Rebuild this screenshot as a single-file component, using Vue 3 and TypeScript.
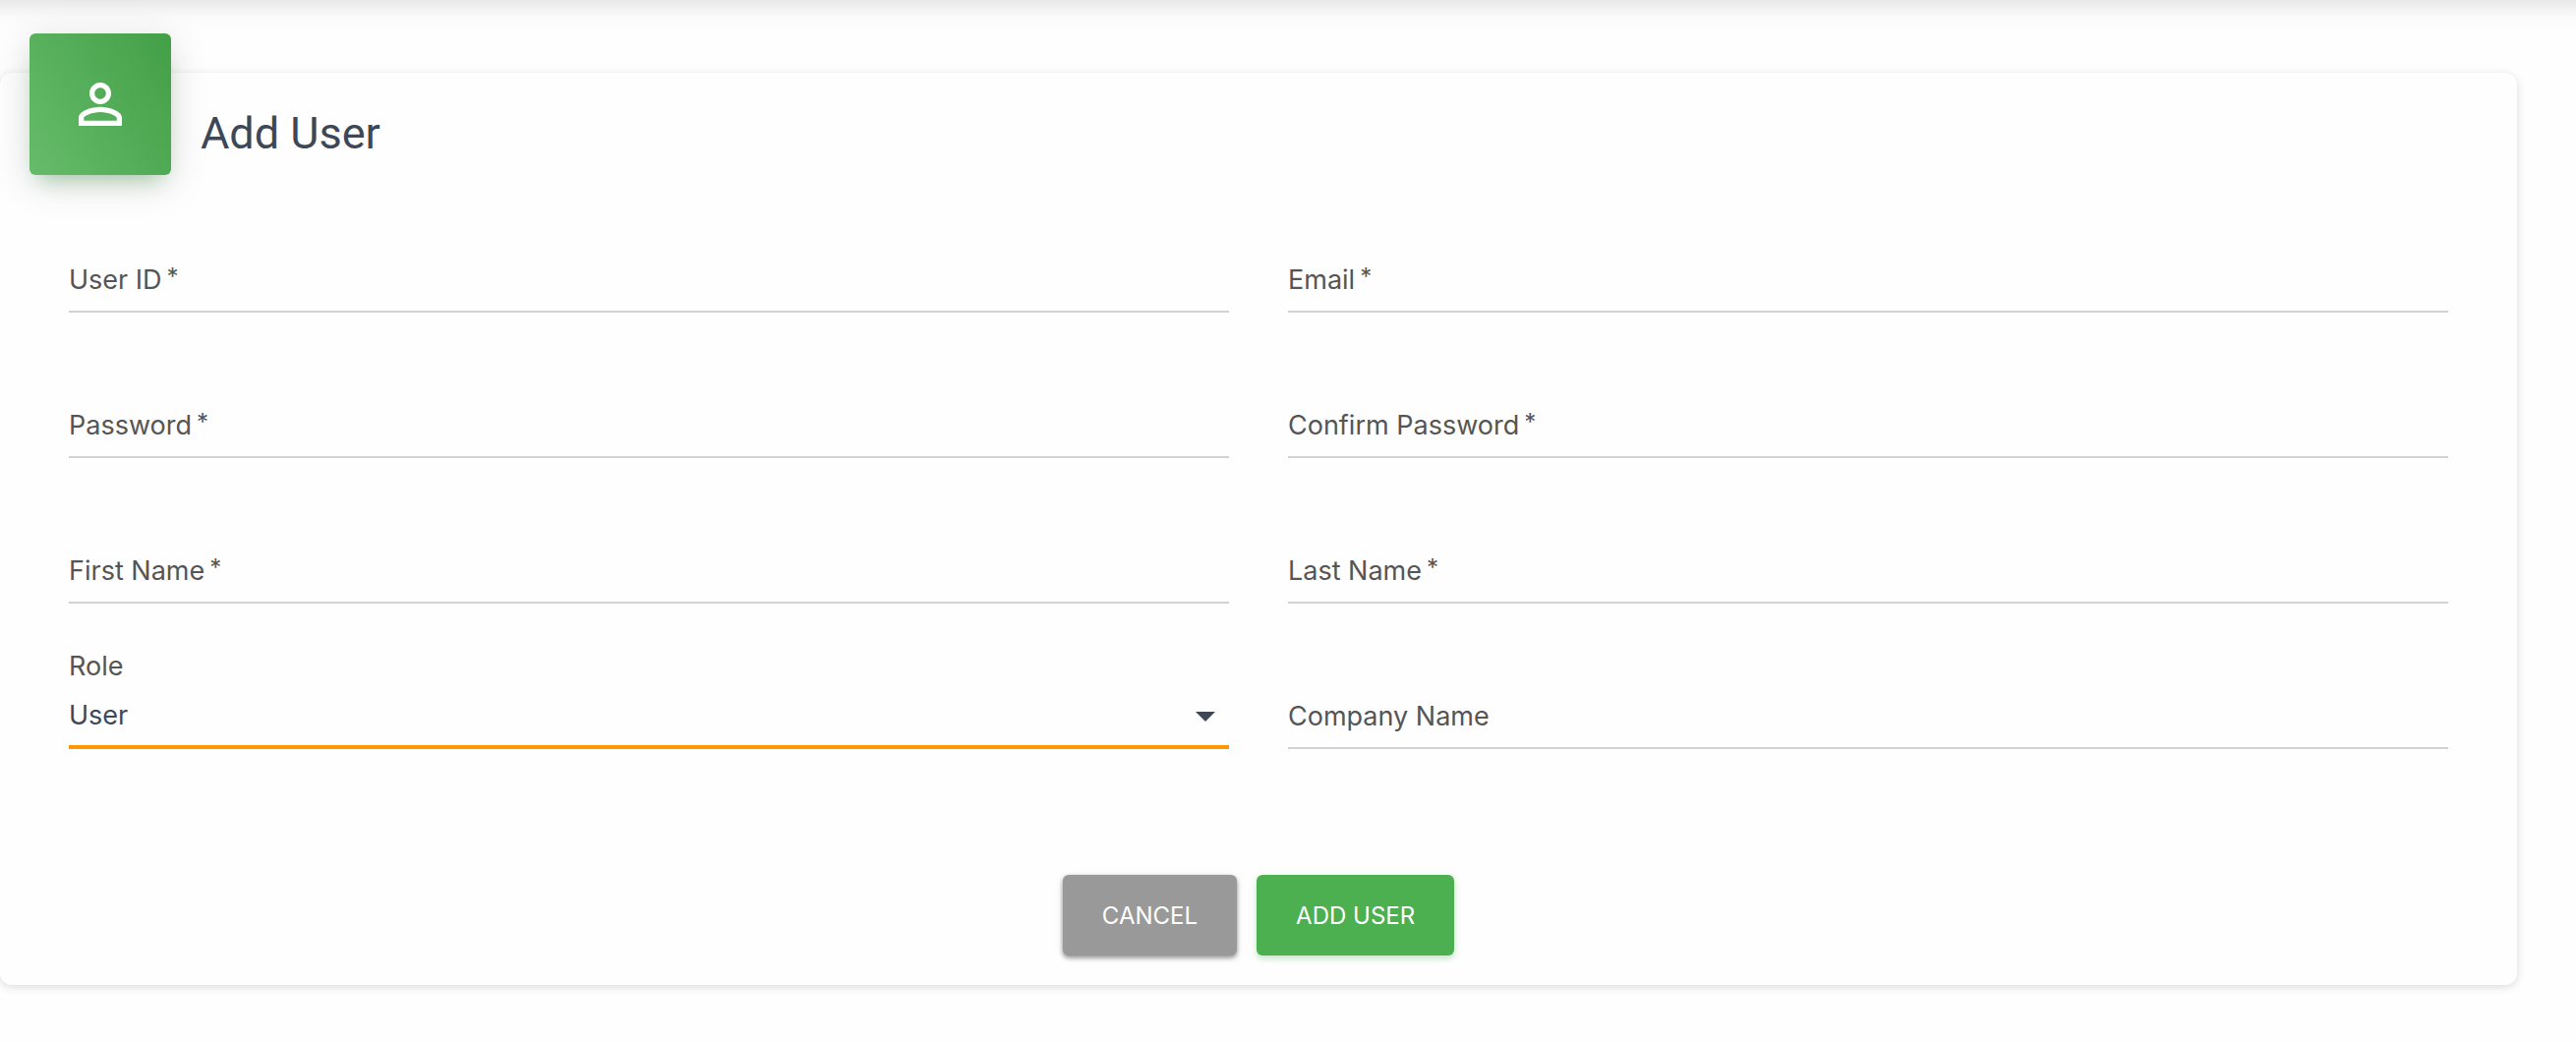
<script setup lang="ts">
import { reactive } from 'vue'

interface Field {
  id: string
  label: string
  type: string
  required: boolean
  options?: string[]
}

const fields: Field[] = [
  { id: 'userId', label: 'User ID', type: 'text', required: true },
  { id: 'email', label: 'Email', type: 'email', required: true },
  { id: 'password', label: 'Password', type: 'password', required: true },
  { id: 'confirmPassword', label: 'Confirm Password', type: 'password', required: true },
  { id: 'firstName', label: 'First Name', type: 'text', required: true },
  { id: 'lastName', label: 'Last Name', type: 'text', required: true },
  { id: 'role', label: 'Role', type: 'select', required: false, options: ['User', 'Admin'] },
  { id: 'company', label: 'Company Name', type: 'text', required: false },
]

const form = reactive<Record<string, string>>({
  userId: '',
  email: '',
  password: '',
  confirmPassword: '',
  firstName: '',
  lastName: '',
  role: 'User',
  company: '',
})

function reset(): void {
  for (const field of fields) form[field.id] = field.options ? field.options[0] : ''
}
</script>

<template>
  <main class="page">
    <form class="card" @submit.prevent>
      <header class="card-header">
        <div class="card-icon">
          <svg viewBox="0 0 24 24" aria-hidden="true">
            <path
              d="M12 5.9c1.16 0 2.1.94 2.1 2.1s-.94 2.1-2.1 2.1S9.9 9.16 9.9 8s.94-2.1 2.1-2.1m0 9c2.97 0 6.1 1.46 6.1 2.1v1.1H5.9V17c0-.64 3.13-2.1 6.1-2.1M12 4C9.79 4 8 5.79 8 8s1.79 4 4 4 4-1.79 4-4-1.79-4-4-4zm0 9c-2.67 0-8 1.34-8 4v3h16v-3c0-2.66-5.33-4-8-4z"
            />
          </svg>
        </div>
        <h1 class="title">Add User</h1>
      </header>

      <div class="fields">
        <template v-for="field in fields" :key="field.id">
          <div v-if="field.options" class="field field-select">
            <label :for="field.id">{{ field.label }}</label>
            <div class="select-wrap">
              <select :id="field.id" v-model="form[field.id]">
                <option v-for="option in field.options" :key="option">{{ option }}</option>
              </select>
              <svg class="arrow" viewBox="0 0 20 10" aria-hidden="true">
                <path d="M0 0h20L10 10z" />
              </svg>
            </div>
          </div>
          <div v-else class="field field-text" :class="{ filled: form[field.id] }">
            <label :for="field.id">{{ field.label }}<span v-if="field.required" class="star">*</span></label>
            <input :id="field.id" v-model="form[field.id]" :type="field.type" />
          </div>
        </template>
      </div>

      <div class="actions">
        <button type="button" class="btn btn-cancel" @click="reset">CANCEL</button>
        <button type="submit" class="btn btn-add">ADD USER</button>
      </div>
    </form>
  </main>
</template>

<style>
body {
  margin: 0;
  background: #fefefe;
}
</style>

<style scoped>
.page {
  box-sizing: border-box;
  padding: 74px 60px 56px 0;
  background: linear-gradient(#e8e8e8, #f4f4f4 10px, #fbfbfb 18px, #fdfdfd 28px, #fefefe 36px);
  font-family: Inter, "Liberation Sans", sans-serif;
  color: #3c4858;
}

.card {
  padding-bottom: 30px;
  border-radius: 12px;
  background: #fefefe;
  box-shadow: 0 2px 8px rgba(0, 0, 0, 0.14);
}

.card-header {
  display: flex;
  align-items: flex-start;
  gap: 30px;
  padding: 0 30px;
}

.card-icon {
  display: flex;
  align-items: center;
  justify-content: center;
  width: 144px;
  height: 144px;
  margin-top: -40px;
  border-radius: 6px;
  background: linear-gradient(60deg, #66bb6a, #43a047);
  box-shadow:
    0 8px 40px rgba(0, 0, 0, 0.14),
    0 14px 20px -10px rgba(76, 175, 80, 0.4);
}

.card-icon svg {
  width: 66px;
  height: 66px;
  fill: #fff;
}

.title {
  margin: 30px 0 0;
  font: 400 45px/64px Roboto, "Liberation Sans", sans-serif;
}

.fields {
  display: grid;
  grid-template-columns: 1fr 1fr;
  gap: 48px 60px;
  padding: 40px 70px 0;
}

.field {
  display: grid;
  font-size: 27px;
}

.field label {
  color: #555;
}

.field-text {
  padding-top: 28px;
}

.field-text label,
.field-text input {
  grid-area: 1 / 1;
}

.field-text label {
  padding-top: 21px;
  line-height: 36px;
  pointer-events: none;
}

.field-text.filled label {
  visibility: hidden;
}

.star {
  margin-left: 5px;
  font-size: 24px;
  line-height: 24px;
  vertical-align: 4px;
}

input,
select {
  box-sizing: border-box;
  width: 100%;
  margin: 0;
  border: 0;
  border-radius: 0;
  outline: 0;
  background: transparent;
  color: #3c4858;
  font: inherit;
}

input {
  height: 72px;
  padding: 4px 0 0;
  border-bottom: 2px solid #d2d2d2;
}

.field-select label {
  padding-top: 2px;
  line-height: 28px;
}

.select-wrap {
  display: grid;
  align-items: center;
}

.select-wrap > * {
  grid-area: 1 / 1;
}

select {
  height: 70px;
  padding: 4px 0 0;
  border-bottom: 4px solid #ff9800;
  appearance: none;
}

.arrow {
  justify-self: end;
  width: 20px;
  height: 10px;
  margin: 4px 14px 0 0;
  fill: #3c4858;
  pointer-events: none;
}

.actions {
  display: flex;
  justify-content: center;
  gap: 20px;
  margin-top: 128px;
}

.btn {
  padding: 25px 40px 23px;
  border: 0;
  border-radius: 6px;
  color: #fff;
  font: 400 24px/34px Inter, "Liberation Sans", sans-serif;
  cursor: pointer;
}

.btn-cancel {
  background: #999;
  box-shadow:
    0 4px 4px rgba(153, 153, 153, 0.14),
    0 2px 4px rgba(0, 0, 0, 0.4),
    0 2px 10px rgba(153, 153, 153, 0.2);
}

.btn-add {
  background: #4caf50;
  box-shadow:
    0 4px 4px rgba(76, 175, 80, 0.14),
    0 2px 10px rgba(76, 175, 80, 0.2);
}
</style>
